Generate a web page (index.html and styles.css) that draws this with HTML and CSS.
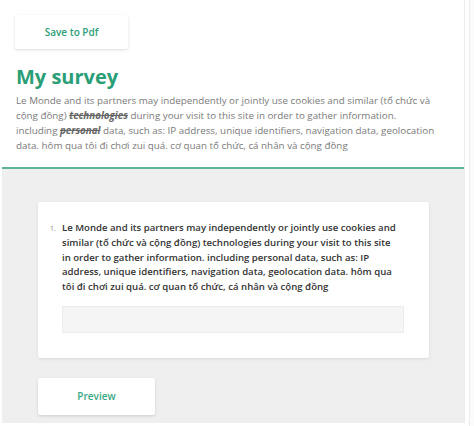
FILE: index.html
```html
<!DOCTYPE html>
<html lang="en">
<head>
<meta charset="utf-8">
<title>My survey</title>
<link rel="stylesheet" href="styles.css">
</head>
<body>
<div class="page">
  <header class="head">
    <button class="btn btn-save">Save to Pdf</button>
    <h1 class="title">My survey</h1>
    <p class="intro">Le Monde and its partners may independently or jointly use cookies and similar (tổ chức và cộng đồng) <s class="strike">technologies</s> during your visit to this site in order to gather information. including <s class="strike">personal</s> data, such as: IP address, unique identifiers, navigation data, geolocation data. hôm qua tôi đi chơi zui quá. cơ quan tổ chức, cá nhân và cộng đồng</p>
  </header>
  <main class="body">
    <section class="card">
      <div class="question">
        <span class="num">1.</span>
        <p class="qtext">Le Monde and its partners may independently or jointly use cookies and similar (tổ chức và cộng đồng) technologies during your visit to this site in order to gather information. including personal data, such as: IP address, unique identifiers, navigation data, geolocation data. hôm qua tôi đi chơi zui quá. cơ quan tổ chức, cá nhân và cộng đồng</p>
      </div>
      <div class="answer"></div>
    </section>
    <button class="btn btn-preview">Preview</button>
  </main>
</div>
<div class="rail"></div>
</body>
</html>
```
FILE: styles.css
```css
html, body {
  margin: 0;
  padding: 0;
  background: #ffffff;
}
body {
  display: flex;
  align-items: flex-start;
  padding-left: 2px;
  height: 426px;
  box-sizing: border-box;
  font-family: "Open Sans", "Noto Sans", sans-serif;
}
.page {
  flex: none;
  width: 463px;
  border-right: 1px solid #ececec;
  box-sizing: border-box;
}
.rail {
  flex: 1;
  margin-left: 4px;
  height: 426px;
  border-left: 1px solid #ececec;
  background: #fbfbfb;
}
.head {
  padding: 15px 13px 14px;
  border-bottom: 2px solid #5db497;
}
.btn {
  display: block;
  border: none;
  background: #ffffff;
  font-family: "Open Sans", "Noto Sans", sans-serif;
  font-weight: 600;
  font-size: 10px;
  color: #2e9e78;
  box-shadow: 0 1px 3px rgba(0, 0, 0, 0.14);
  border-radius: 2px;
  padding: 0;
}
.btn-save {
  width: 113px;
  height: 34px;
}
.title {
  margin: 14px 0 0 1px;
  font-size: 20px;
  line-height: 28px;
  font-weight: 700;
  color: #2a9e76;
}
.intro {
  margin: 2px 0 0 1px;
  max-width: 420.5px;
  font-size: 9.8px;
  line-height: 15px;
  color: #7a7a7a;
}
.strike {
  font-weight: 700;
  font-style: italic;
  color: #666666;
}
.body {
  background: #efefef;
  padding: 33px 35px 8px 36px;
}
.card {
  background: #ffffff;
  border-radius: 2px;
  box-shadow: 0 1px 3px rgba(0, 0, 0, 0.1);
  padding: 19px 25px 25px 12px;
}
.question {
  display: flex;
  align-items: baseline;
}
.num {
  flex: none;
  width: 12px;
  font-size: 7px;
  color: #888888;
}
.qtext {
  margin: 0;
  max-width: 337px;
  font-size: 9.6px;
  line-height: 14.75px;
  font-weight: 600;
  color: #333333;
}
.answer {
  margin: 11px 0 0 12px;
  height: 27px;
  background: #f5f5f5;
  border: 1px solid #ececec;
  box-sizing: border-box;
}
.btn-preview {
  margin-top: 20px;
  width: 117px;
  height: 37px;
  color: #3aa885;
}
```
